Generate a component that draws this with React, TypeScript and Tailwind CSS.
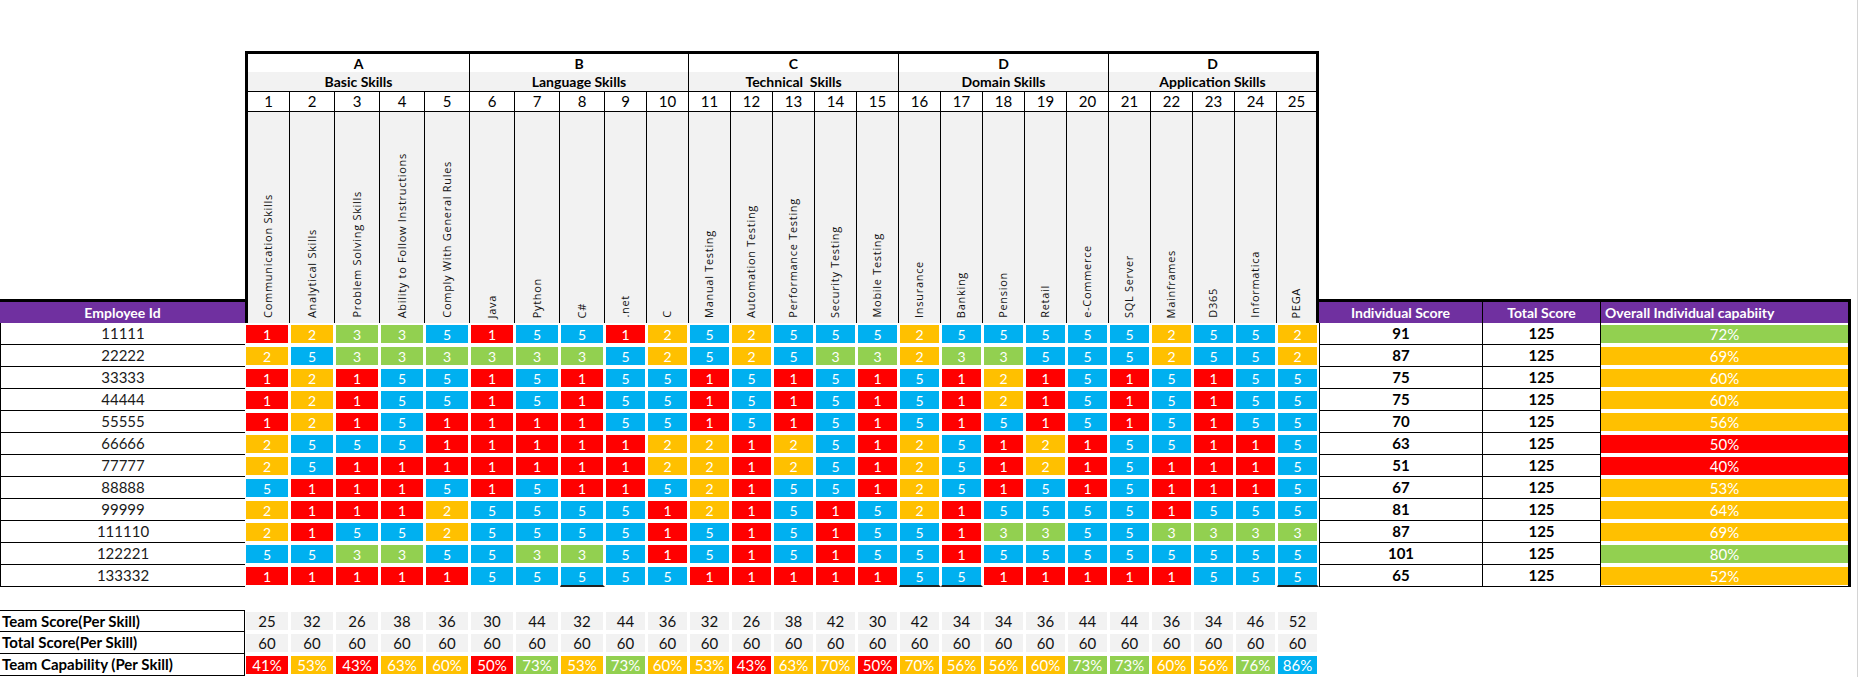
import React from 'react';

const skills = [
    "Communication Skills", "Analytical Skills", "Problem Solving Skills", "Ability to Follow Instructions", "Comply With General Rules",
    "Java", "Python", "C#", ".net", "C",
    "Manual Testing", "Automation Testing", "Performance Testing", "Security Testing", "Mobile Testing",
    "Insurance", "Banking", "Pension", "Retail", "e-Commerce",
    "SQL Server", "Mainframes", "D365", "Informatica", "PEGA"
];

const groups = [
    { letter: "A", name: "Basic Skills", from: 0 },
    { letter: "B", name: "Language Skills", from: 5 },
    { letter: "C", name: "Technical  Skills", from: 10 },
    { letter: "D", name: "Domain Skills", from: 15 },
    { letter: "D", name: "Application Skills", from: 20 },
];

const employees = [
    { id: "11111", scores: [1,2,3,3,5,1,5,5,1,2,5,2,5,5,5,2,5,5,5,5,5,2,5,5,2], total: 91, pct: 72 },
    { id: "22222", scores: [2,5,3,3,3,3,3,3,5,2,5,2,5,3,3,2,3,3,5,5,5,2,5,5,2], total: 87, pct: 69 },
    { id: "33333", scores: [1,2,1,5,5,1,5,1,5,5,1,5,1,5,1,5,1,2,1,5,1,5,1,5,5], total: 75, pct: 60 },
    { id: "44444", scores: [1,2,1,5,5,1,5,1,5,5,1,5,1,5,1,5,1,2,1,5,1,5,1,5,5], total: 75, pct: 60 },
    { id: "55555", scores: [1,2,1,5,1,1,1,1,5,5,1,5,1,5,1,5,1,5,1,5,1,5,1,5,5], total: 70, pct: 56 },
    { id: "66666", scores: [2,5,5,5,1,1,1,1,1,2,2,1,2,5,1,2,5,1,2,1,5,5,1,1,5], total: 63, pct: 50 },
    { id: "77777", scores: [2,5,1,1,1,1,1,1,1,2,2,1,2,5,1,2,5,1,2,1,5,1,1,1,5], total: 51, pct: 40 },
    { id: "88888", scores: [5,1,1,1,5,1,5,1,1,5,2,1,5,5,1,2,5,1,5,1,5,1,1,1,5], total: 67, pct: 53 },
    { id: "99999", scores: [2,1,1,1,2,5,5,5,5,1,2,1,5,1,5,2,1,5,5,5,5,1,5,5,5], total: 81, pct: 64 },
    { id: "111110", scores: [2,1,5,5,2,5,5,5,5,1,5,1,5,1,5,5,1,3,3,5,5,3,3,3,3], total: 87, pct: 69 },
    { id: "122221", scores: [5,5,3,3,5,5,3,3,5,1,5,1,5,1,5,5,1,5,5,5,5,5,5,5,5], total: 101, pct: 80 },
    { id: "133332", scores: [1,1,1,1,1,5,5,5,5,5,1,1,1,1,1,5,5,1,1,1,1,1,5,5,5], total: 65, pct: 52 },
];

const teamScore = [25,32,26,38,36,30,44,32,44,36,32,26,38,42,30,42,34,34,36,44,44,36,34,46,52];
const teamCapability = [41,53,43,63,60,50,73,53,73,60,53,43,63,70,50,70,56,56,60,73,73,60,56,76,86];

/** Cells in the last row that keep a dark underline in the sheet */
const underlined = [7, 15, 16, 24];

const scoreColor = (v: number) =>
    v === 1 ? 'bg-[#ff0000]' : v === 2 ? 'bg-[#ffc000]' : v === 3 ? 'bg-[#92d050]' : 'bg-[#00b0f0]';

const pctColor = (p: number) =>
    p <= 50 ? 'bg-[#ff0000]' : p <= 70 ? 'bg-[#ffc000]' : p <= 80 ? 'bg-[#92d050]' : 'bg-[#00b0f0]';

const colW = (i: number) => (i < 8 ? 'w-[45px]' : 'w-[42px]');

/** header columns sit inside the 3px box border */
const headW = (i: number) => (i === 0 ? 'w-[42px]' : i === 24 ? 'w-[39px]' : i < 8 ? 'w-[45px]' : 'w-[42px]');

const SkillHeader = () => (
    <div className="flex w-[1074px] border-t-[3px] border-x-[3px] border-black">
        {groups.map((g, gi) => {
            const cols = [0, 1, 2, 3, 4].map(k => g.from + k);
            return (
                <div key={gi} className="flex flex-col">
                    <div className={`h-[18px] flex items-center justify-center font-bold text-[14px] ${gi < 4 ? 'border-r border-black' : ''}`}>
                        {g.letter}
                    </div>
                    <div className={`h-[20px] flex items-center justify-center font-bold text-[14px] bg-[#f2f2f2] border-b border-black whitespace-pre ${gi < 4 ? 'border-r' : ''}`}>
                        {g.name}
                    </div>
                    <div className="flex">
                        {cols.map(i => (
                            <div key={i} className={`${headW(i)} h-[20px] flex items-center justify-center text-[15px] border-b border-black ${i < 24 ? 'border-r' : ''}`}>
                                {i + 1}
                            </div>
                        ))}
                    </div>
                    <div className="flex">
                        {cols.map(i => (
                            <div key={i} className={`${headW(i)} h-[211px] bg-[#f2f2f2] flex flex-col items-center justify-end pb-[5px] border-black ${i < 24 ? 'border-r' : ''}`}>
                                <span className="[writing-mode:vertical-rl] rotate-180 whitespace-nowrap font-['Open_Sans',sans-serif] text-[11px] tracking-[0.7px] text-[#111]">
                                    {skills[i]}
                                </span>
                            </div>
                        ))}
                    </div>
                </div>
            );
        })}
    </div>
);

const App = () => {
    return (
        <div className="w-[1858px] h-[677px] overflow-hidden bg-white pt-[51px] border-r border-[#d4d4d4] font-['Lato',sans-serif] text-black">
            <div className="flex items-end">
                <div className="w-[245px] h-[24px] border-t-[3px] border-black bg-[#7030a0] text-white font-bold text-[14px] flex items-center justify-center">
                    Employee Id
                </div>
                <SkillHeader />
                <div className="flex h-[24px] border-t-[3px] border-r-[3px] border-black bg-[#7030a0] text-white font-bold text-[14px]">
                    <div className="w-[164px] flex items-center justify-center border-r border-black">Individual Score</div>
                    <div className="w-[118px] flex items-center justify-center border-r border-black">Total Score</div>
                    <div className="w-[247px] flex items-center pl-[4px]">Overall Individual capabiity</div>
                </div>
            </div>

            {employees.map((emp, ri) => {
                const last = ri === employees.length - 1;
                return (
                    <div key={emp.id} className="flex h-[22px]">
                        <div className="w-[245px] border-l border-b border-black flex items-center justify-center text-[15px] text-[#1a1a1a]">
                            {emp.id}
                        </div>
                        {emp.scores.map((v, i) => (
                            <div key={i} className={`${colW(i)} border-y-2 border-l border-r-2 border-white ${last && underlined.includes(i) ? 'border-b-[#222]' : ''} ${scoreColor(v)} flex items-center justify-center text-white text-[14px]`}>
                                {v}
                            </div>
                        ))}
                        <div className="w-[164px] border-l border-r border-b border-black flex items-center justify-center font-bold text-[15px]">
                            {emp.total}
                        </div>
                        <div className="w-[118px] border-r border-b border-black flex items-center justify-center font-bold text-[15px]">
                            125
                        </div>
                        <div className={`w-[250px] border-r-[3px] border-black pt-[2px] ${last ? 'pb-px border-b' : 'pb-[2px]'}`}>
                            <div className={`h-full ${pctColor(emp.pct)} flex items-center justify-center text-white text-[15px]`}>
                                {emp.pct}%
                            </div>
                        </div>
                    </div>
                );
            })}

            <div className="mt-[23px] flex flex-col">
                {[
                    { label: "Team Score(Per Skill)", values: teamScore.map(String), pct: false },
                    { label: "Total Score(Per Skill)", values: teamScore.map(() => "60"), pct: false },
                    { label: "Team Capability (Per Skill)", values: teamCapability.map(p => `${p}%`), pct: true },
                ].map((row, ri) => (
                    <div key={row.label} className="flex h-[22px]">
                        <div className={`w-[245px] border-r border-b border-black ${ri === 0 ? 'border-t' : ''} flex items-center pl-[2px] font-bold text-[15px]`}>
                            {row.label}
                        </div>
                        {row.values.map((v, i) => (
                            <div key={i} className={`${colW(i)} border-y-2 border-l border-r-2 border-white flex items-center justify-center text-[15px] ${row.pct ? `${pctColor(teamCapability[i])} text-white` : 'bg-[#f2f2f2] text-[#111]'}`}>
                                {v}
                            </div>
                        ))}
                    </div>
                ))}
            </div>
        </div>
    );
};

export default App;
